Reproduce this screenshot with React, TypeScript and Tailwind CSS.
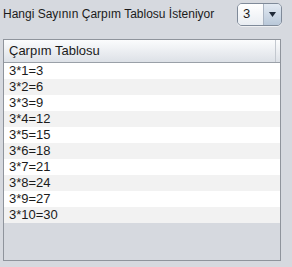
import React from "react";

export default function App() {
  const rows = Array.from({ length: 10 }, (_, i) => `3*${i + 1}=${3 * (i + 1)}`);
  return (
    <div
      className="w-[292px] h-[267px] bg-[#d6d9df] text-[12px] text-[#1b1b1b] overflow-hidden"
      style={{ fontFamily: '"Liberation Sans", Arial, sans-serif' }}
    >
      <div className="h-[28px] flex items-center pl-[3px] pr-[10px]">
        <span>Hangi Sayının Çarpım Tablosu İsteniyor</span>
        <div className="ml-auto w-[45px] h-[23px] flex rounded-[5px] border border-[#7f8a99] overflow-hidden shadow-[0_1px_0_rgba(255,255,255,0.6)]">
          <div className="flex-1 flex items-center pl-[5px] text-[13px] bg-gradient-to-b from-[#ffffff] to-[#e9edf2]">3</div>
          <div className="w-[18px] flex items-center justify-center border-l border-[#aab4c2] bg-gradient-to-b from-[#e3eaf3] to-[#b9c8d9]">
            <svg width="7" height="5" viewBox="0 0 7 5">
              <path d="M0 0h7L3.5 5z" fill="#1f2a38" />
            </svg>
          </div>
        </div>
      </div>
      <div className="mt-[11px] ml-[3px] w-[278px] h-[222px] border border-[#8f949c] flex flex-col text-[13px]">
        <div className="h-[23px] flex border-b border-[#9aa0a8] bg-gradient-to-b from-[#fbfcfd] to-[#dde1e7]">
          <div className="flex-1 flex items-center pl-[5px] border-r border-[#c3c8cf]">Çarpım Tablosu</div>
          <div className="w-[4px]" />
        </div>
        {rows.map((r, i) => (
          <div
            key={r}
            className={`h-[16px] flex items-center pl-[5px] ${i % 2 === 0 ? "bg-white" : "bg-[#f2f2f2]"}`}
          >
            {r}
          </div>
        ))}
      </div>
    </div>
  );
}
